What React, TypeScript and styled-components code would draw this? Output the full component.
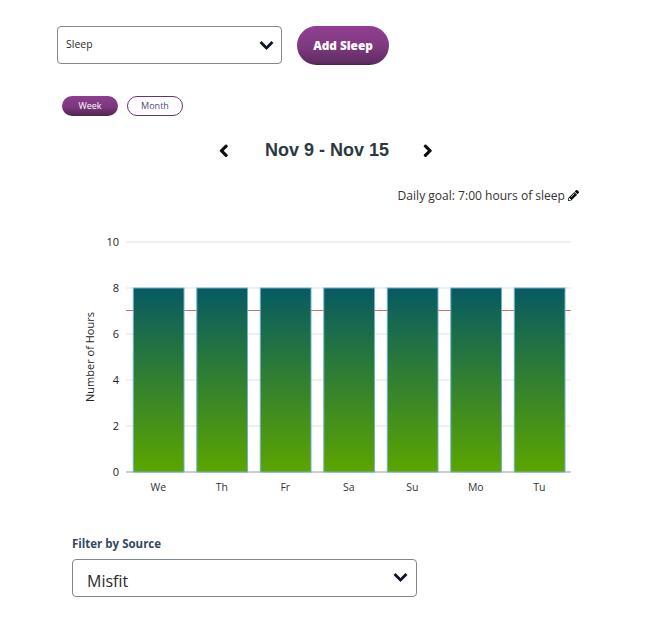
import React from "react";
import styled, { createGlobalStyle } from "styled-components";
import { FaChevronDown, FaChevronLeft, FaChevronRight, FaPencilAlt } from "react-icons/fa";

const Global = createGlobalStyle`
  html, body { margin: 0; padding: 0; background: #fff; }
  body { font-family: "Open Sans", sans-serif; color: #333; }
`;

const Page = styled.div`
  width: 657px;
  height: 630px;
  overflow: hidden;
  padding-top: 26px;
  box-sizing: border-box;
`;

const TopRow = styled.div`
  display: flex;
  align-items: flex-start;
  gap: 15px;
  padding-left: 57px;
`;

const SelectBox = styled.div<{ $w: number; $size: number; $pad: number; $textShift: number }>`
  width: ${(p) => p.$w}px;
  height: 38px;
  box-sizing: border-box;
  border: 1px solid #7f8890;
  border-radius: 4px;
  display: flex;
  align-items: center;
  justify-content: space-between;
  padding-left: ${(p) => p.$pad}px;
  padding-bottom: ${(p) => (p.$textShift < 0 ? -p.$textShift * 2 : 0)}px;
  padding-top: ${(p) => (p.$textShift > 0 ? p.$textShift * 2 : 0)}px;
  font-size: ${(p) => p.$size}px;
  color: #2b2b2b;
  background: #fff;
`;

const Chevron = styled(FaChevronDown)<{ $mr: number; $mt: number }>`
  color: #0b1524;
  font-size: 15px;
  stroke: currentColor;
  stroke-width: 24px;
  margin-right: ${(p) => p.$mr}px;
  margin-top: ${(p) => p.$mt}px;
`;

const AddButton = styled.button`
  width: 92px;
  height: 39px;
  border: none;
  padding: 0 0 1px;
  border-radius: 20px;
  background: linear-gradient(180deg, #923e93 0%, #7f3a80 50%, #5f2c62 95%, #3f1f45 100%);
  color: #fff;
  font-family: "Open Sans", sans-serif;
  font-weight: 800;
  font-size: 11.8px;
`;

const PillRow = styled.div`
  display: flex;
  gap: 9px;
  padding-left: 62px;
  margin-top: 31px;
`;

const Pill = styled.div<{ $active?: boolean }>`
  width: 56px;
  height: 20px;
  box-sizing: border-box;
  border-radius: 10px;
  display: flex;
  align-items: center;
  justify-content: center;
  padding-bottom: 1px;
  font-size: 9px;
  color: ${(p) => (p.$active ? "#fff" : "#4d4a7c")};
  background: ${(p) =>
    p.$active ? "linear-gradient(180deg, #8f3d90 0%, #7a387c 55%, #50264f 100%)" : "#fff"};
  border: ${(p) => (p.$active ? "none" : "1px solid #6e3270")};
`;

const WeekNav = styled.div`
  display: flex;
  align-items: center;
  justify-content: center;
  margin-top: 24px;
  height: 21px;
  padding-right: 6px;
  color: #0b0f14;
  font-size: 13.5px;
  svg {
    stroke: currentColor;
    stroke-width: 40px;
  }
`;

const WeekTitle = styled.div`
  width: 181px;
  margin: 0 3px 0 6px;
  text-align: center;
  font-family: "Liberation Sans", Arial, sans-serif;
  font-weight: 700;
  font-size: 18px;
  color: #2b3a42;
  white-space: nowrap;
`;

const GoalRow = styled.div`
  display: flex;
  justify-content: flex-end;
  align-items: center;
  gap: 3px;
  margin-top: 24px;
  padding-right: 78px;
  height: 20px;
  font-size: 12.05px;
  color: #333;
`;

const PencilIcon = styled(FaPencilAlt)`
  font-size: 11px;
  color: #0a0a0a;
`;

const Chart = styled.svg`
  display: block;
  margin-top: 25px;
  font-family: "Open Sans", sans-serif;
`;

const FilterBlock = styled.div`
  padding-left: 72px;
  margin-top: 26px;
`;

const FilterLabel = styled.div`
  font-size: 11.5px;
  font-weight: 700;
  line-height: 16px;
  color: #34495e;
  margin-bottom: 7px;
`;

const ticks = [10, 8, 6, 4, 2, 0];
const days = ["We", "Th", "Fr", "Sa", "Su", "Mo", "Tu"];
const yOf = (v: number) => 12 + (10 - v) * 23;

export default function App() {
  return (
    <Page>
      <Global />
      <TopRow>
        <SelectBox $w={225} $size={10.5} $pad={8} $textShift={-1}>
          Sleep
          <Chevron $mr={7} $mt={2} />
        </SelectBox>
        <AddButton>Add Sleep</AddButton>
      </TopRow>
      <PillRow>
        <Pill $active>Week</Pill>
        <Pill>Month</Pill>
      </PillRow>
      <WeekNav>
        <FaChevronLeft />
        <WeekTitle>Nov 9 - Nov 15</WeekTitle>
        <FaChevronRight />
      </WeekNav>
      <GoalRow>
        Daily goal: 7:00 hours of sleep
        <PencilIcon />
      </GoalRow>
      <Chart width={657} height={280} viewBox="0 0 657 280">
        <defs>
          <linearGradient id="barFill" x1="0" y1="0" x2="0" y2="1">
            <stop offset="0%" stopColor="#075a62" />
            <stop offset="100%" stopColor="#5ca500" />
          </linearGradient>
        </defs>
        {ticks.map((t) => (
          <g key={t}>
            <line
              x1={126}
              x2={571}
              y1={yOf(t)}
              y2={yOf(t)}
              stroke={t === 0 ? "#bdbdbd" : "#ebebeb"}
              strokeWidth={1.5}
            />
            <text x={119} y={yOf(t) + 4} textAnchor="end" fontSize={11} fill="#222">
              {t}
            </text>
          </g>
        ))}
        <line x1={126} x2={571} y1={80.5} y2={80.5} stroke="#d9696c" strokeWidth={1.2} />
        {days.map((d, i) => {
          const x = 133.3 + i * 63.5;
          return (
            <g key={d}>
              <rect
                x={x}
                y={yOf(8)}
                width={50.7}
                height={yOf(0) - yOf(8)}
                fill="url(#barFill)"
                stroke="#6db2c9"
                strokeWidth={1}
              />
              <text x={x + 25} y={261} textAnchor="middle" fontSize={10.5} fill="#333">
                {d}
              </text>
            </g>
          );
        })}
        <text
          transform="translate(94 127) rotate(-90)"
          textAnchor="middle"
          fontSize={11}
          fill="#222"
        >
          Number of Hours
        </text>
      </Chart>
      <FilterBlock>
        <FilterLabel>Filter by Source</FilterLabel>
        <SelectBox $w={345} $size={16} $pad={14} $textShift={3}>
          Misfit
          <Chevron $mr={8} $mt={-8} />
        </SelectBox>
      </FilterBlock>
    </Page>
  );
}
